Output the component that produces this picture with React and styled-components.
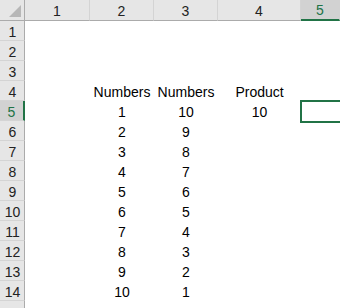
import React from "react";
import styled, { createGlobalStyle } from "styled-components";

const GlobalStyle = createGlobalStyle`
  html, body {
    margin: 0;
    padding: 0;
    background: #ffffff;
    overflow: hidden;
  }
`;

const Sheet = styled.div`
  display: grid;
  grid-template-columns: 25px 65px 64px 64px 83px 1fr;
  grid-template-rows: 21px repeat(15, 20px);
  width: 340px;
  height: 308px;
  overflow: hidden;
  font-family: "Liberation Sans", Arial, sans-serif;
  font-size: 14px;
  color: #000;
  background: #fff;
`;

const Corner = styled.div`
  position: relative;
  background: #e6e6e6;
  border-right: 1px solid #ababab;
  border-bottom: 1px solid #ababab;
  &::after {
    content: "";
    position: absolute;
    right: 3px;
    bottom: 3px;
    width: 0;
    height: 0;
    border-left: 12px solid transparent;
    border-bottom: 12px solid #b7b7b7;
  }
`;

const ColHead = styled.div`
  display: flex;
  align-items: center;
  justify-content: center;
  padding-top: 1px;
  background: ${(p) => (p.$active ? "#d2d2d2" : "#e6e6e6")};
  border-right: 1px solid ${(p) => (p.$last ? "transparent" : "#d4d4d4")};
  border-bottom: ${(p) => (p.$active ? "2px solid #217346" : "1px solid #ababab")};
  color: ${(p) => (p.$active ? "#217346" : "#222")};
`;

const RowHead = styled.div`
  display: flex;
  align-items: center;
  justify-content: center;
  padding-top: 2px;
  background: ${(p) => (p.$active ? "#d2d2d2" : "#e6e6e6")};
  border-right: ${(p) => (p.$active ? "2px solid #217346" : "1px solid #ababab")};
  border-bottom: 1px solid #d4d4d4;
  color: ${(p) => (p.$active ? "#217346" : "#222")};
  padding-left: ${(p) => (p.$active ? "0" : "1px")};
`;

const Cell = styled.div`
  position: relative;
  display: flex;
  align-items: center;
  justify-content: center;
  padding-top: 2px;
  white-space: nowrap;
  &::after {
    content: "";
    display: ${(p) => (p.$selected ? "block" : "none")};
    position: absolute;
    left: -1px;
    top: -1px;
    right: -2px;
    bottom: -2px;
    border: 2px solid #217346;
  }
`;

const cols = [1, 2, 3, 4, 5];

const data = {
  4: { 2: "Numbers", 3: "Numbers", 4: "Product" },
  5: { 2: "1", 3: "10", 4: "10" },
};
for (let i = 2; i <= 10; i++) {
  data[i + 4] = { 2: String(i), 3: String(11 - i) };
}

export default function App() {
  const rows = Array.from({ length: 15 }, (_, i) => i + 1);
  return (
    <>
      <GlobalStyle />
      <Sheet>
        <Corner />
        {cols.map((c) => (
          <ColHead key={c} $active={c === 5} $last={c === 5}>
            {c}
          </ColHead>
        ))}
        {rows.map((r) => (
          <React.Fragment key={r}>
            {/* row 15 only peeks in at the bottom edge, its label is out of view */}
            <RowHead $active={r === 5}>{r < 15 ? r : null}</RowHead>
            {cols.map((c) => (
              <Cell key={c} $selected={r === 5 && c === 5}>
                {data[r] && data[r][c]}
              </Cell>
            ))}
          </React.Fragment>
        ))}
      </Sheet>
    </>
  );
}
